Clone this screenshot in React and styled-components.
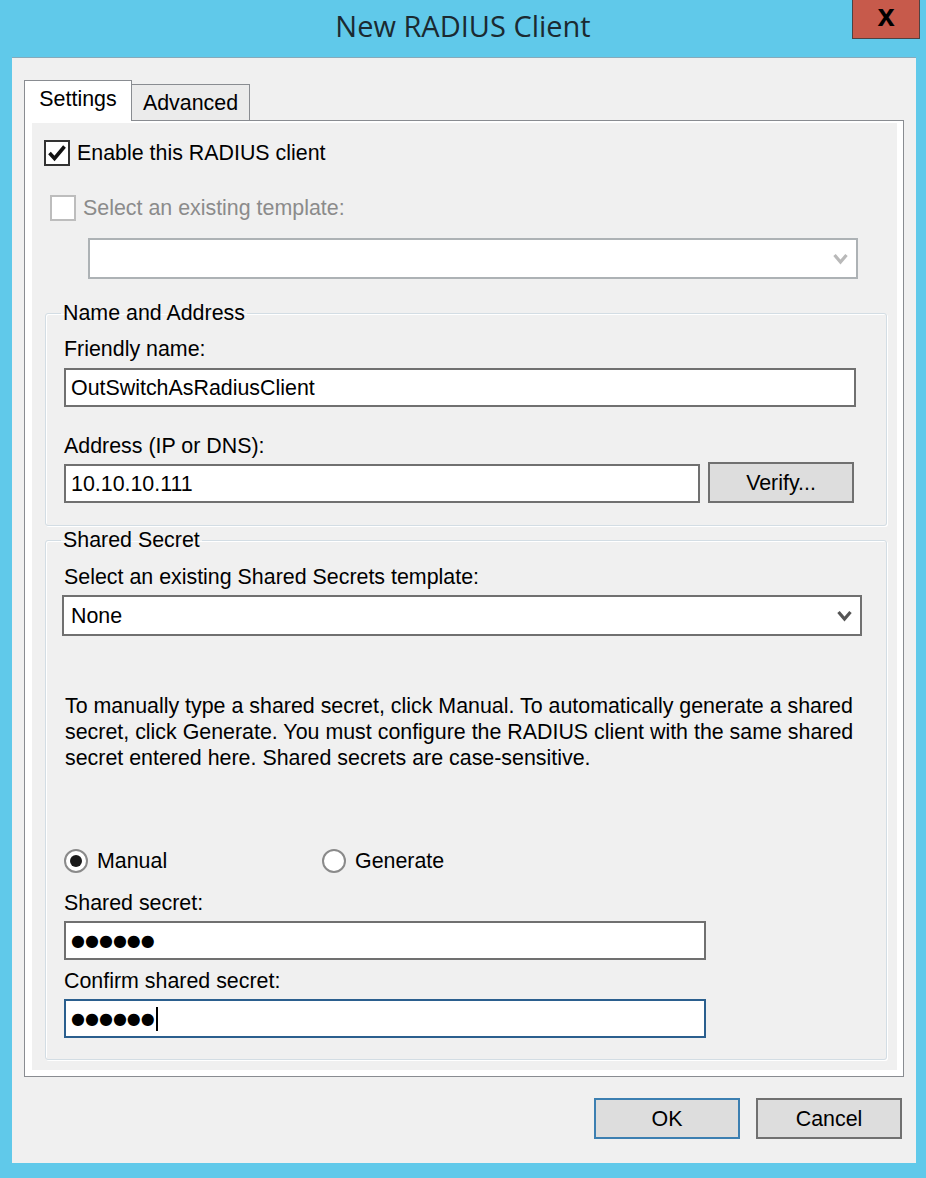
import React from "react";
import styled, { createGlobalStyle } from "styled-components";

const GlobalStyle = createGlobalStyle`
  html, body {
    margin: 0;
    padding: 0;
  }
  body {
    background: #60c9ea;
    font-family: "Liberation Sans", Arial, sans-serif;
    font-size: 21.4px;
    color: #000;
  }
  * {
    box-sizing: border-box;
  }
`;

const Window = styled.div`
  width: 926px;
  height: 1178px;
  background: #60c9ea;
  display: flex;
  flex-direction: column;
`;

const TitleBar = styled.div`
  height: 57px;
  flex-shrink: 0;
  display: grid;
  grid-template-columns: 1fr auto 1fr;
`;

const Title = styled.h1`
  grid-column: 2;
  margin: 0;
  padding-top: 6px;
  font: 400 29px/40px "Open Sans", sans-serif;
  color: #1b2a31;
  white-space: nowrap;
`;

const CloseButton = styled.div`
  grid-column: 3;
  justify-self: end;
  align-self: start;
  margin-right: 6px;
  width: 68px;
  height: 39px;
  background: #c75a4b;
  border: 1px solid #4f4242;
  border-top: none;
  display: flex;
  justify-content: center;
  align-items: flex-start;
  font: 700 31px/31px "Liberation Sans", sans-serif;
  color: #000;
`;

const Client = styled.div`
  flex: 1;
  margin: 0 10px 15px 12px;
  background: #f0f0f0;
  border-top: 1px solid #86aabb;
  padding: 22px 12px 24px 12px;
  display: flex;
  flex-direction: column;
`;

const TabStrip = styled.div`
  display: flex;
  align-items: flex-end;
  height: 41px;
  margin-bottom: -1px;
  position: relative;
  z-index: 1;
`;

const Tab = styled.div`
  display: flex;
  justify-content: center;
  padding-top: 6px;
  line-height: 24px;
  border: 1px solid #898c91;
  border-bottom: none;
  width: ${(p) => (p.$active ? 108 : 118)}px;
  height: ${(p) => (p.$active ? 41 : 36)}px;
  margin-bottom: ${(p) => (p.$active ? 0 : 1)}px;
  background: ${(p) => (p.$active ? "#fff" : "#ebebeb")};
  ${(p) => !p.$active && "border-left: none;"}
`;

const Panel = styled.div`
  flex: 1;
  border: 1px solid #898c91;
  background: #fff;
  padding: 2px 6px 6px 7px;
  display: flex;
  flex-direction: column;
`;

const Page = styled.div`
  flex: 1;
  background: #f0f0f0;
  padding: 17px 10px 0 12px;
  display: flex;
  flex-direction: column;
`;

const CheckRow = styled.div`
  display: flex;
  align-items: center;
  gap: 7px;
  height: 26px;
  margin-top: ${(p) => p.$top || 0}px;
  margin-left: ${(p) => p.$left || 0}px;
  line-height: 24px;
  color: ${(p) => (p.$disabled ? "#8b8b8b" : "#000")};
`;

const CheckBox = styled.span`
  width: 26px;
  height: 26px;
  flex-shrink: 0;
  background: #fff;
  border: 2px solid ${(p) => (p.$disabled ? "#bdbdbd" : "#333")};
  display: flex;
  align-items: center;
  justify-content: center;
`;

const Combo = styled.div`
  height: 41px;
  width: ${(p) => p.$width}px;
  margin-top: ${(p) => p.$top || 0}px;
  margin-left: ${(p) => p.$left || 0}px;
  background: #fff;
  border: 2px solid ${(p) => (p.$disabled ? "#adb2b5" : "#707070")};
  display: flex;
  align-items: center;
  justify-content: space-between;
  padding: 0 8px 0 7px;
  line-height: 24px;
`;

const Group = styled.fieldset`
  margin: ${(p) => p.$top}px 0 0 1px;
  padding: 0 13px ${(p) => p.$bottom}px 18px;
  border: 1px solid #d3dde4;
  border-radius: 3px;
  box-shadow: inset 1px 1px 0 #fff, 1px 1px 0 #fff;
  min-width: 0;
`;

const Legend = styled.legend`
  padding: 0 2px;
  margin-left: -3px;
  line-height: 24px;
`;

const GroupBody = styled.div`
  display: flex;
  flex-direction: column;
`;

const Label = styled.div`
  line-height: 24px;
  margin-top: ${(p) => p.$top || 0}px;
  white-space: nowrap;
`;

const TextBox = styled.div`
  height: 39px;
  width: ${(p) => p.$width}px;
  margin-top: ${(p) => p.$top || 0}px;
  background: #fff;
  border: 2px solid ${(p) => (p.$focused ? "#2b5f8e" : "#707070")};
  display: flex;
  align-items: center;
  padding: 0 5px;
  line-height: 24px;
  white-space: nowrap;
`;

const Dots = styled.span`
  font: 16px/24px "DejaVu Sans", sans-serif;
  letter-spacing: 0;
`;

const Caret = styled.span`
  width: 2px;
  height: 24px;
  background: #000;
  margin-left: 1px;
`;

const FieldRow = styled.div`
  display: flex;
  align-items: flex-end;
  gap: 8px;
  margin-top: ${(p) => p.$top || 0}px;
`;

const Button = styled.div`
  width: 146px;
  height: 41px;
  background: #dddddd;
  border: 2px solid ${(p) => (p.$default ? "#3c7fb1" : "#707070")};
  display: flex;
  align-items: center;
  justify-content: center;
  line-height: 24px;
`;

const Paragraph = styled.p`
  margin: 57px 0 0 1px;
  line-height: 26px;
  white-space: nowrap;
`;

const RadioRow = styled.div`
  display: grid;
  grid-template-columns: 258px auto;
  margin-top: 78px;
  height: 24px;
`;

const RadioItem = styled.div`
  display: flex;
  align-items: center;
  gap: 9px;
  line-height: 24px;
`;

const RadioCircle = styled.span`
  width: 24px;
  height: 24px;
  border-radius: 50%;
  border: 2px solid #8a8a8a;
  background: #fff;
  display: flex;
  align-items: center;
  justify-content: center;
  &::after {
    content: "";
    width: 12px;
    height: 12px;
    border-radius: 50%;
    background: ${(p) => (p.$checked ? "#1a1a1a" : "transparent")};
  }
`;

const Footer = styled.div`
  display: flex;
  justify-content: flex-end;
  gap: 16px;
  margin-top: 21px;
  padding-right: 2px;
`;

const Chevron = ({ color }) => (
  <svg width="15" height="12" viewBox="0 0 15 12">
    <polyline points="1.5,2 7.5,9 13.5,2" fill="none" stroke={color} strokeWidth="3.2" />
  </svg>
);

const CheckMark = () => (
  <svg width="20" height="20" viewBox="0 0 20 20">
    <polyline points="2.5,10 7.5,15.5 17.5,3.5" fill="none" stroke="#111" strokeWidth="3.6" />
  </svg>
);

export default function App() {
  return (
    <>
      <GlobalStyle />
      <Window>
        <TitleBar>
          <Title>New RADIUS Client</Title>
          <CloseButton>x</CloseButton>
        </TitleBar>
        <Client>
          <TabStrip>
            <Tab $active>Settings</Tab>
            <Tab>Advanced</Tab>
          </TabStrip>
          <Panel>
            <Page>
              <CheckRow>
                <CheckBox>
                  <CheckMark />
                </CheckBox>
                Enable this RADIUS client
              </CheckRow>
              <CheckRow $top={29} $left={6} $disabled>
                <CheckBox $disabled />
                Select an existing template:
              </CheckRow>
              <Combo $disabled $width={770} $top={17} $left={44}>
                <span />
                <Chevron color="#b9b9b9" />
              </Combo>

              <Group $top={22} $bottom={22}>
                <Legend>Name and Address</Legend>
                <GroupBody>
                  <Label $top={12}>Friendly name:</Label>
                  <TextBox $width={792} $top={7}>OutSwitchAsRadiusClient</TextBox>
                  <Label $top={27}>Address (IP or DNS):</Label>
                  <FieldRow $top={4}>
                    <TextBox $width={636}>10.10.10.111</TextBox>
                    <Button>Verify...</Button>
                  </FieldRow>
                </GroupBody>
              </Group>

              <Group $top={2} $bottom={21}>
                <Legend>Shared Secret</Legend>
                <GroupBody>
                  <Label $top={13}>Select an existing Shared Secrets template:</Label>
                  <Combo $width={800} $top={6} $left={-2}>
                    <span>None</span>
                    <Chevron color="#555" />
                  </Combo>
                  <Paragraph>
                    To manually type a shared secret, click Manual. To automatically generate a shared
                    <br />
                    secret, click Generate. You must configure the RADIUS client with the same shared
                    <br />
                    secret entered here. Shared secrets are case-sensitive.
                  </Paragraph>
                  <RadioRow>
                    <RadioItem>
                      <RadioCircle $checked />
                      Manual
                    </RadioItem>
                    <RadioItem>
                      <RadioCircle />
                      Generate
                    </RadioItem>
                  </RadioRow>
                  <Label $top={18}>Shared secret:</Label>
                  <TextBox $width={642} $top={6}>
                    <Dots>●●●●●●</Dots>
                  </TextBox>
                  <Label $top={9}>Confirm shared secret:</Label>
                  <TextBox $width={642} $top={6} $focused>
                    <Dots>●●●●●●</Dots>
                    <Caret />
                  </TextBox>
                </GroupBody>
              </Group>
            </Page>
          </Panel>
          <Footer>
            <Button $default>OK</Button>
            <Button>Cancel</Button>
          </Footer>
        </Client>
      </Window>
    </>
  );
}
